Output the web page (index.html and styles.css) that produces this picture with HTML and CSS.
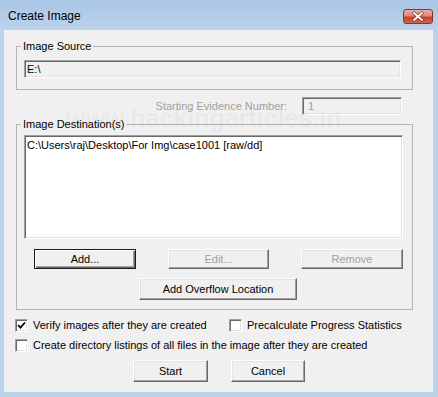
FILE: index.html
```html
<!DOCTYPE html>
<html>
<head>
<meta charset="utf-8">
<title>Create Image</title>
<link rel="stylesheet" href="styles.css">
</head>
<body>
<div class="window">
  <div class="titlebar">
    <span class="title">Create Image</span>
    <span class="close-btn">
      <svg width="30" height="15" viewBox="0 0 30 15">
        <path d="M11 4 L19 11 M19 4 L11 11" stroke="#7a2a1e" stroke-width="3.4" stroke-linecap="round" fill="none"/>
        <path d="M11 4 L19 11 M19 4 L11 11" stroke="#ffffff" stroke-width="2" stroke-linecap="round" fill="none"/>
      </svg>
    </span>
  </div>
  <div class="client">
    <div class="group g-source">
      <div class="group-label">Image Source</div>
      <div class="field src-field">E:\</div>
    </div>

    <div class="evidence-row">
      <span class="disabled-text">Starting Evidence Number:</span>
      <div class="field ev-field">1</div>
    </div>

    <div class="group g-dest">
      <div class="group-label">Image Destination(s)</div>
      <div class="listbox">
        <div class="list-item">C:\Users\raj\Desktop\For Img\case1001 [raw/dd]</div>
      </div>
      <div class="btn-row">
        <div class="btn btn-default btn-add">Add...</div>
        <div class="btn btn-disabled btn-edit">Edit...</div>
        <div class="btn btn-disabled btn-remove">Remove</div>
      </div>
      <div class="btn btn-overflow">Add Overflow Location</div>
    </div>

    <div class="check-row row1">
      <span class="checkbox">
        <svg width="9" height="9" viewBox="0 0 9 9"><path d="M1 4 L3.4 6.6 L8 1.5" stroke="#000" stroke-width="1.8" fill="none"/></svg>
      </span>
      <span class="check-label verify">Verify images after they are created</span>
      <span class="checkbox"></span>
      <span class="check-label">Precalculate Progress Statistics</span>
    </div>
    <div class="check-row row2">
      <span class="checkbox"></span>
      <span class="check-label">Create directory listings of all files in the image after they are created</span>
    </div>

    <div class="action-row">
      <div class="btn btn-start">Start</div>
      <div class="btn btn-cancel">Cancel</div>
    </div>
  </div>
  <div class="watermark">www.hackingarticles.in</div>
</div>
</body>
</html>
```

FILE: styles.css
```css
html, body {
  margin: 0;
  padding: 0;
}
body {
  width: 438px;
  height: 397px;
  overflow: hidden;
  font-family: "Liberation Sans", Arial, sans-serif;
  font-size: 11px;
  line-height: 13px;
  color: #000;
}
.window {
  position: relative;
  width: 438px;
  height: 397px;
  background: linear-gradient(#a9c6e6 0px, #bcd3ec 30px, #bcd3ec 100%);
  display: flex;
  flex-direction: column;
}
.titlebar {
  height: 30px;
  display: flex;
  justify-content: space-between;
  align-items: flex-start;
}
.title {
  font-size: 12px;
  line-height: 14px;
  margin: 9px 0 0 8px;
  color: #000;
}
.close-btn {
  width: 30px;
  height: 15px;
  margin: 9px 5px 0 0;
  box-sizing: border-box;
  border: 1px solid #8a3226;
  border-radius: 3px;
  background: linear-gradient(#eab0a6 0%, #df8a78 45%, #c8432c 55%, #d0634c 100%);
  display: flex;
  align-items: center;
  justify-content: center;
  overflow: hidden;
}
.close-btn svg {
  display: block;
  margin: -1px;
}
.client {
  margin: 0 5px 5px 4px;
  height: 362px;
  background: #f0f0f0;
  display: flex;
  flex-direction: column;
  align-items: flex-start;
}
.group {
  border: 1px solid #b4b4b4;
  box-sizing: border-box;
  width: 397px;
  margin-left: 12px;
}
.group-label {
  display: table;
  margin: -7px 0 0 4px;
  padding: 0 2px;
  background: #f0f0f0;
  line-height: 13px;
}
.g-source {
  margin-top: 16px;
  padding-bottom: 11px;
}
.field {
  box-sizing: border-box;
  height: 18px;
  border: 1px solid;
  border-color: #a0a0a0 #ffffff #ffffff #a0a0a0;
  box-shadow: inset 1px 1px 0 #696969, inset -1px -1px 0 #e3e3e3;
  background: #f0f0f0;
  padding: 2px 0 0 2px;
  line-height: 13px;
}
.src-field {
  width: 377px;
  margin: 7px 0 0 7px;
}
.evidence-row {
  display: flex;
  align-items: center;
  justify-content: flex-end;
  width: 398px;
  margin-top: 7px;
}
.disabled-text {
  color: #a0a0a0;
  margin-right: 15px;
}
.ev-field {
  width: 100px;
  color: #a0a0a0;
  padding-left: 5px;
}
.g-dest {
  margin-top: 9px;
  padding-bottom: 9px;
}
.listbox {
  box-sizing: border-box;
  width: 379px;
  height: 104px;
  margin: 4px 0 0 7px;
  background: #fff;
  border: 1px solid;
  border-color: #a0a0a0 #ffffff #ffffff #a0a0a0;
  box-shadow: inset 1px 1px 0 #696969, inset -1px -1px 0 #e3e3e3;
  padding: 3px 0 0 2px;
}
.btn-row {
  display: flex;
  gap: 32px;
  margin: 10px 0 0 17px;
}
.btn {
  box-sizing: border-box;
  height: 20px;
  background: #f0f0f0;
  border: 1px solid;
  border-color: #ffffff #696969 #696969 #ffffff;
  box-shadow: inset -1px -1px 0 #a0a0a0, inset 1px 1px 0 #e3e3e3;
  display: flex;
  align-items: center;
  justify-content: center;
  line-height: 13px;
}
.btn-default {
  border-color: #1a1a1a;
  box-shadow: inset 1px 1px 0 #ffffff, inset -1px -1px 0 #696969, inset -2px -2px 0 #a0a0a0;
}
.btn-disabled {
  color: #a0a0a0;
}
.btn-add { width: 102px; }
.btn-edit { width: 101px; }
.btn-remove { width: 102px; }
.btn-overflow {
  width: 158px;
  height: 22px;
  margin: 9px 0 0 122px;
}
.check-row {
  display: flex;
  align-items: center;
  height: 14px;
  margin-left: 11px;
}
.row1 { margin-top: 8px; }
.row2 { margin-top: 6px; }
.checkbox {
  box-sizing: border-box;
  width: 13px;
  height: 13px;
  background: #fff;
  border: 1px solid;
  border-color: #a0a0a0 #ffffff #ffffff #a0a0a0;
  box-shadow: inset 1px 1px 0 #696969, inset -1px -1px 0 #e3e3e3;
  display: flex;
  align-items: center;
  justify-content: center;
  flex-shrink: 0;
}
.checkbox svg { display: block; }
.check-label {
  margin-left: 5px;
  white-space: nowrap;
}
.check-label.verify {
  width: 196px;
}
.action-row {
  display: flex;
  gap: 23px;
  margin: 8px 0 0 129px;
}
.btn-start { width: 75px; height: 22px; }
.btn-cancel { width: 74px; height: 22px; }
.watermark {
  position: absolute;
  left: 66px;
  top: 104px;
  font-size: 25px;
  line-height: 28px;
  font-weight: bold;
  color: rgba(120, 120, 120, 0.07);
  pointer-events: none;
  white-space: nowrap;
}
```
